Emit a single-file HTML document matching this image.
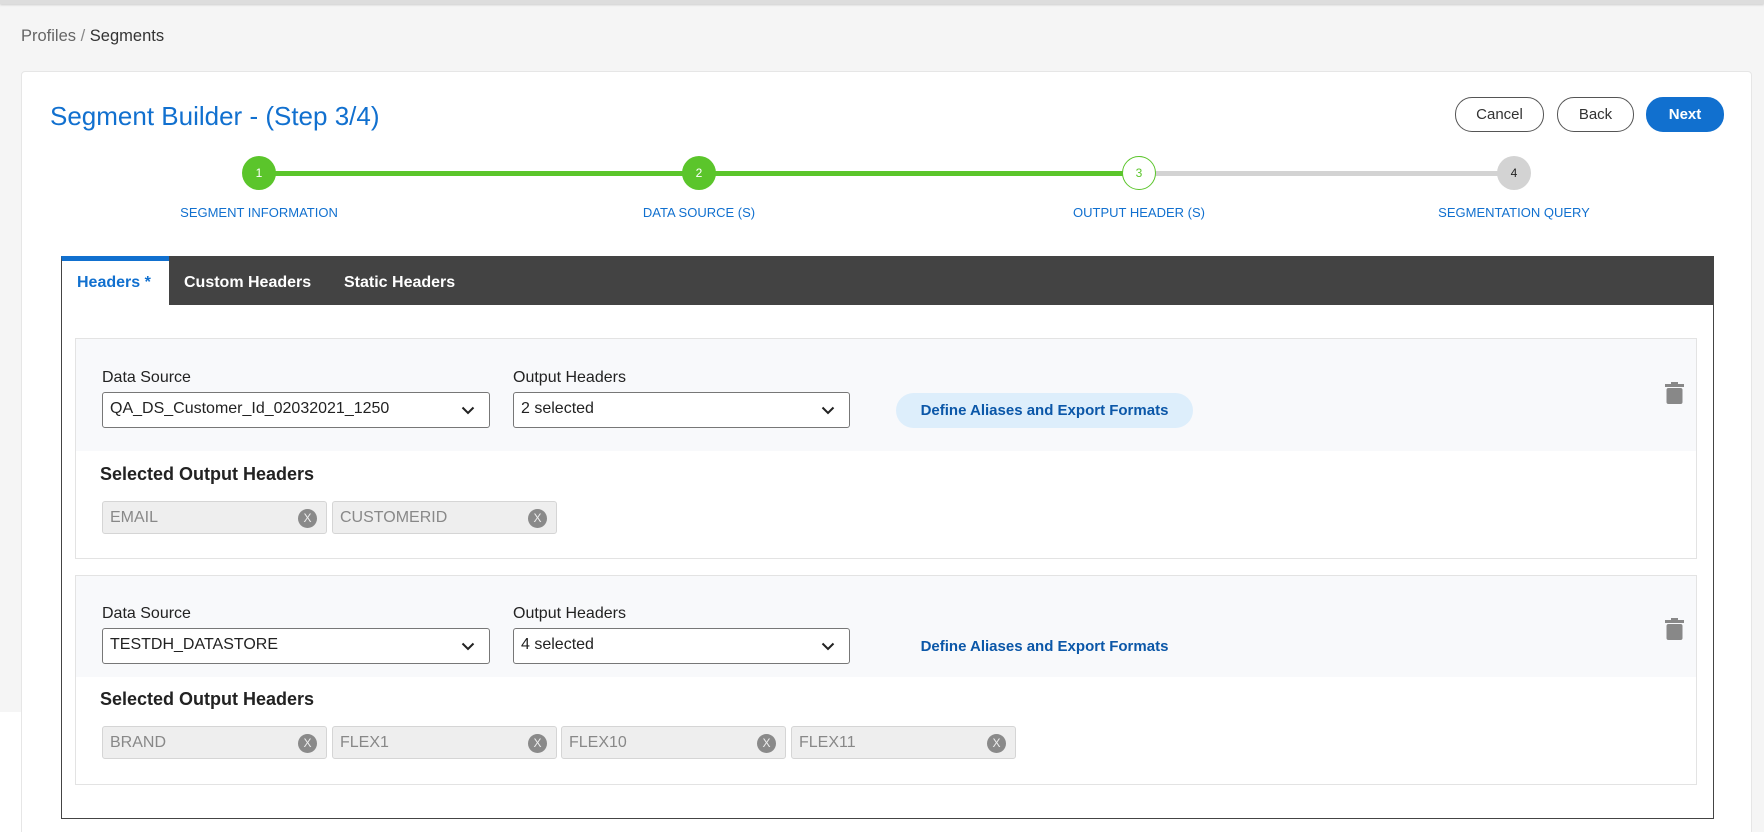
<!DOCTYPE html>
<html style="overflow:hidden;width:1764px;height:832px"><head><meta charset="utf-8"><style>
*{box-sizing:border-box;margin:0;padding:0}
body{width:1764px;height:832px;background:#fff;font-family:"Liberation Sans",sans-serif;position:relative;overflow:hidden}
.abs{position:absolute}
.bg{left:0;top:0;width:1764px;height:712px;background:#f5f5f5}
.bg2{left:21px;top:712px;width:1743px;height:120px;background:#f5f5f5}
.topline{left:0;top:0;width:1764px;height:4px;background:#ddd;box-shadow:0 1px 2px #ccc}
.card{left:21px;top:71px;width:1731px;height:780px;background:#fff;border:1px solid #e6e6e6;border-radius:4px}
.btn{border-radius:17px;height:35px;top:97px;font-size:15px;display:flex;align-items:center;justify-content:center;color:#333;border:1px solid #555;background:#fff}
.circ{width:34px;height:34px;border-radius:50%;top:156px;font-size:12px;display:flex;align-items:center;justify-content:center}
.lbl{top:205px;font-size:13px;color:#1170cf;transform:translateX(-50%);white-space:nowrap}
.sec{left:75px;width:1622px;border:1px solid #e3e3e3;background:#fff}
.shade{position:absolute;left:0;top:0;width:100%;height:112px;background:#f8f9fb}
.fl{position:absolute;font-size:16px;color:#222}
.sel{position:absolute;height:36px;border:1px solid #777;border-radius:3px;background:#fff;font-size:16px;color:#222;padding:7px 7px}
.sel svg{position:absolute;right:14px;top:13px}
.chip{position:absolute;width:225px;height:33px;background:#eee;border:1px solid #d5d5d5;border-radius:3px;font-size:16px;color:#888;padding:7px 7px}
.chip i{position:absolute;right:9px;top:7px;width:19px;height:19px;border-radius:50%;background:#8a8a8a;color:#eee;font-style:normal;font-size:12px;text-align:center;line-height:19px}
.soh{position:absolute;font-size:18px;font-weight:bold;color:#222}
.def{position:absolute;font-size:15px;font-weight:bold;color:#0b57a8;display:flex;align-items:center;justify-content:center}
</style></head><body>
<div class="abs bg"></div><div class="abs bg2"></div>
<div class="abs topline"></div>
<div class="abs" style="left:21px;top:27px;font-size:16.5px;color:#666">Profiles <span style="color:#888">/</span> <span style="color:#333">Segments</span></div>
<div class="abs card"></div>
<div class="abs" style="left:50px;top:101px;font-size:26px;color:#1170cf">Segment Builder - (Step 3/4)</div>
<div class="abs btn" style="left:1455px;width:89px">Cancel</div>
<div class="abs btn" style="left:1557px;width:77px">Back</div>
<div class="abs btn" style="left:1646px;width:78px;background:#1170cf;border-color:#1170cf;color:#fff;font-weight:bold">Next</div>
<div class="abs" style="left:259px;top:171px;width:880px;height:5px;background:#5bc52b"></div>
<div class="abs" style="left:1139px;top:171px;width:375px;height:5px;background:#d3d3d3"></div>
<div class="abs circ" style="left:242px;background:#5bc52b;color:#fff">1</div>
<div class="abs circ" style="left:682px;background:#5bc52b;color:#fff">2</div>
<div class="abs circ" style="left:1122px;background:#fff;border:1.5px solid #5bc52b;color:#5bc52b">3</div>
<div class="abs circ" style="left:1497px;background:#d3d3d3;color:#222">4</div>
<div class="abs lbl" style="left:259px">SEGMENT INFORMATION</div>
<div class="abs lbl" style="left:699px">DATA SOURCE (S)</div>
<div class="abs lbl" style="left:1139px">OUTPUT HEADER (S)</div>
<div class="abs lbl" style="left:1514px">SEGMENTATION QUERY</div>

<div class="abs" style="left:61px;top:256px;width:1653px;height:563px;border:1px solid #444;border-top:none;background:#fff"></div>
<div class="abs" style="left:61px;top:256px;width:1653px;height:49px;background:#434343"></div>
<div class="abs" style="left:61px;top:256px;width:108px;height:49px;background:#fff;border-top:5px solid #1170cf;border-left:1px solid #444"></div>
<div class="abs" style="left:77px;top:274px;font-size:16px;font-weight:bold;color:#1170cf">Headers *</div>
<div class="abs" style="left:184px;top:274px;font-size:16px;font-weight:bold;color:#fff">Custom Headers</div>
<div class="abs" style="left:344px;top:274px;font-size:16px;font-weight:bold;color:#fff">Static Headers</div>

<div class="abs sec" style="top:338px;height:221px">
<div class="shade"></div>
<div class="fl" style="left:26px;top:30px">Data Source</div>
<div class="sel" style="left:26px;top:53px;width:388px">QA_DS_Customer_Id_02032021_1250<svg width="14" height="9" viewBox="0 0 14 9"><path d="M1.5 1.5L7 7l5.5-5.5" fill="none" stroke="#222" stroke-width="2"/></svg></div>
<div class="fl" style="left:437px;top:30px">Output Headers</div>
<div class="sel" style="left:437px;top:53px;width:337px">2 selected<svg width="14" height="9" viewBox="0 0 14 9"><path d="M1.5 1.5L7 7l5.5-5.5" fill="none" stroke="#222" stroke-width="2"/></svg></div>
<div class="def" style="left:820px;top:54px;width:297px;height:35px;background:#ddeefb;border-radius:18px">Define Aliases and Export Formats</div>
<svg style="position:absolute;left:1589px;top:43px" width="19" height="22" viewBox="0 0 19 22"><rect x="0" y="2" width="19" height="3" fill="#888"/><rect x="6" y="0" width="7" height="3" fill="#888"/><rect x="1.5" y="6" width="16" height="16" rx="2" fill="#888"/></svg>
<div class="soh" style="left:24px;top:125px">Selected Output Headers</div>
<div class="chip" style="left:26px;top:162px">EMAIL<i>X</i></div>
<div class="chip" style="left:256px;top:162px">CUSTOMERID<i>X</i></div>
</div>

<div class="abs sec" style="top:575px;height:210px">
<div class="shade" style="height:101px"></div>
<div class="fl" style="left:26px;top:29px">Data Source</div>
<div class="sel" style="left:26px;top:52px;width:388px">TESTDH_DATASTORE<svg width="14" height="9" viewBox="0 0 14 9"><path d="M1.5 1.5L7 7l5.5-5.5" fill="none" stroke="#222" stroke-width="2"/></svg></div>
<div class="fl" style="left:437px;top:29px">Output Headers</div>
<div class="sel" style="left:437px;top:52px;width:337px">4 selected<svg width="14" height="9" viewBox="0 0 14 9"><path d="M1.5 1.5L7 7l5.5-5.5" fill="none" stroke="#222" stroke-width="2"/></svg></div>
<div class="def" style="left:820px;top:53px;width:297px;height:35px">Define Aliases and Export Formats</div>
<svg style="position:absolute;left:1589px;top:42px" width="19" height="22" viewBox="0 0 19 22"><rect x="0" y="2" width="19" height="3" fill="#888"/><rect x="6" y="0" width="7" height="3" fill="#888"/><rect x="1.5" y="6" width="16" height="16" rx="2" fill="#888"/></svg>
<div class="soh" style="left:24px;top:113px">Selected Output Headers</div>
<div class="chip" style="left:26px;top:150px">BRAND<i>X</i></div>
<div class="chip" style="left:256px;top:150px">FLEX1<i>X</i></div>
<div class="chip" style="left:485px;top:150px">FLEX10<i>X</i></div>
<div class="chip" style="left:715px;top:150px">FLEX11<i>X</i></div>
</div>
</body></html>
